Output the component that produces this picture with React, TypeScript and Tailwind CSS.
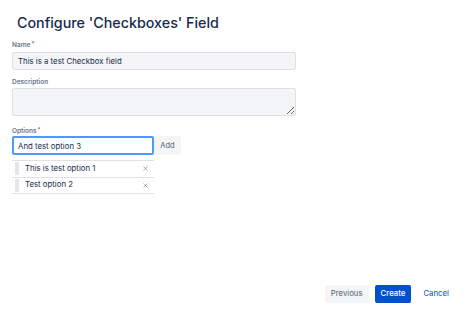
import { X } from 'lucide-react';

const options = ['This is test option 1', 'Test option 2'];

const Label = ({ text, required }: { text: string; required?: boolean }) => (
  <div className="h-[9px] flex items-center text-[6.5px] font-semibold leading-none text-[#6B778C]">
    {text}
    {required && <span className="text-[#DE350B] ml-[1px] -mt-[4px] text-[6px]">*</span>}
  </div>
);

const App = () => {
  return (
    <div
      className="w-[474px] h-[318px] bg-white flex flex-col overflow-hidden"
      style={{ fontFamily: 'Inter, "Noto Sans", sans-serif' }}
    >
      <h1 className="pt-[13px] pl-[17px] h-[33px] text-[14.3px] leading-[20px] font-medium text-[#172B4D]">
        Configure 'Checkboxes' Field
      </h1>

      <div className="pl-[12px] pt-[8px] flex flex-col">
        <Label text="Name" required />
        <input
          readOnly
          value="This is a test Checkbox field"
          className="mt-[2px] w-[284px] h-[18px] px-[5px] bg-[#F4F5F7] border border-[#DFE1E6] rounded-[2px] text-[7.8px] text-[#172B4D] outline-none"
        />

        <div className="mt-[8px]">
          <Label text="Description" />
        </div>
        <textarea
          readOnly
          className="mt-[1px] w-[284px] h-[28px] bg-[#F4F5F7] border border-[#DFE1E6] rounded-[2px] outline-none resize-y"
        />

        <div className="mt-[11px]">
          <Label text="Options" required />
        </div>
        <div className="flex items-center">
          <input
            readOnly
            value="And test option 3"
            className="w-[142px] h-[19px] px-[4px] bg-white border-2 border-[#4C9AFF] rounded-[2px] text-[7.8px] text-[#172B4D] outline-none"
          />
          <button className="h-[19px] w-[27px] bg-[#F4F5F7] rounded-[2px] text-[7.5px] text-[#505F79]">Add</button>
        </div>

        <div className="mt-[5px] w-[142px] border-t border-[#DFE1E6]">
          {options.map((o) => (
            <div key={o} className="h-[16.5px] flex items-center border-b border-[#DFE1E6]">
              <div className="ml-[3px] w-[4px] h-[13px] bg-[#E4E6EA]" />
              <span className="ml-[6px] flex-1 text-[7.8px] text-[#172B4D]">{o}</span>
              <X className="w-[7px] h-[7px] mr-[5px] text-[#6B778C]" strokeWidth={2} />
            </div>
          ))}
        </div>
      </div>

      <div className="mt-auto pb-[15px] pr-[19px] flex justify-end items-center gap-[6px]">
        <button className="h-[18px] px-[6px] bg-[#F4F5F7] rounded-[2px] text-[7.8px] text-[#505F79]">Previous</button>
        <button className="h-[18px] px-[6px] bg-[#0052CC] rounded-[2px] text-[7.8px] font-medium text-white">Create</button>
        <button className="h-[18px] px-[6px] rounded-[2px] text-[7.8px] text-[#0052CC]">Cancel</button>
      </div>
    </div>
  );
};

export default App;
